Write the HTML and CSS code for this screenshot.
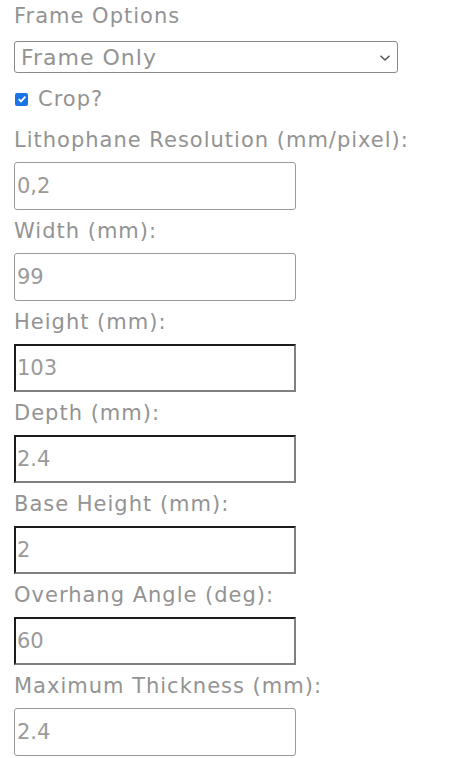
FILE: index.html
```html
<!DOCTYPE html>
<html>
<head>
<meta charset="utf-8">
<link rel="stylesheet" href="styles.css">
</head>
<body>
<div class="form">
  <label class="lbl first">Frame Options</label>
  <div class="select">
    <span>Frame Only</span>
    <svg class="chev" width="12" height="8" viewBox="0 0 12 8"><path d="M1.5 1.8 L6 6 L10.5 1.8" fill="none" stroke="#555" stroke-width="1.5"/></svg>
  </div>
  <div class="check-row">
    <span class="checkbox"><svg width="10" height="10" viewBox="0 0 10 10"><path d="M1.8 5.2 L4 7.4 L8.4 2.6" fill="none" stroke="#fff" stroke-width="1.8"/></svg></span>
    <span class="check-lbl">Crop?</span>
  </div>
  <label class="lbl">Lithophane Resolution (mm/pixel):</label>
  <div class="inp round">0,2</div>
  <label class="lbl">Width (mm):</label>
  <div class="inp round">99</div>
  <label class="lbl">Height (mm):</label>
  <div class="inp inset">103</div>
  <label class="lbl">Depth (mm):</label>
  <div class="inp inset">2.4</div>
  <label class="lbl">Base Height (mm):</label>
  <div class="inp inset">2</div>
  <label class="lbl">Overhang Angle (deg):</label>
  <div class="inp inset">60</div>
  <label class="lbl">Maximum Thickness (mm):</label>
  <div class="inp round">2.4</div>
</div>
</body>
</html>
```
FILE: styles.css
```css
html, body { margin: 0; padding: 0; background: #fff; }
body { font-family: "DejaVu Sans", "Open Sans", sans-serif; color: #939393; }
.form { padding: 0 14px; display: flex; flex-direction: column; align-items: flex-start; }
.lbl { display: block; font-size: 21px; letter-spacing: 1px; line-height: 33px; height: 33px; margin-bottom: 5px; white-space: nowrap; }
.lbl.first { margin-bottom: 8px; }
.select { box-sizing: border-box; width: 384px; height: 32px; border: 1px solid #8a8a8a; border-radius: 3px; display: flex; align-items: center; justify-content: space-between; padding: 0 6px 0 6px; font-size: 22px; letter-spacing: 1px; color: #939393; }
.chev { margin-top: 2px; }
.check-row { display: flex; align-items: center; height: 40px; margin-top: 6px; margin-bottom: 5px; }
.checkbox { width: 13px; height: 13px; background: #1a73e8; border-radius: 2px; display: flex; align-items: center; justify-content: center; margin-left: 1px; margin-right: 10px; }
.check-lbl { font-size: 21px; letter-spacing: 1px; }
.inp { box-sizing: border-box; width: 282px; height: 48px; display: flex; align-items: center; padding-left: 2px; font-size: 21px; color: #9a9a9a; margin-bottom: 5px; }
.round { border: 1px solid #9a9a9a; border-radius: 3px; }
.inset { border: 2px solid; border-color: #1c1c1c #808080 #808080 #1c1c1c; padding-left: 1px; }
```
